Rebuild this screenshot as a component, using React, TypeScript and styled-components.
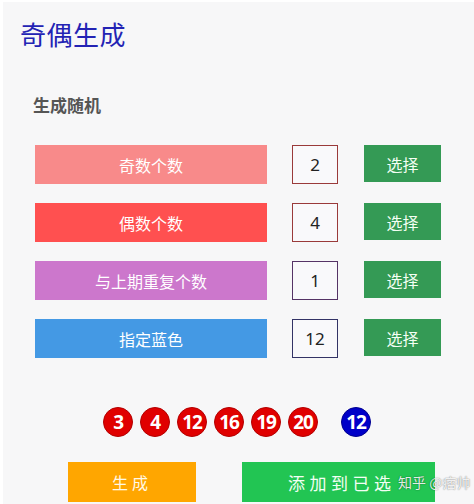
import React from "react";
import styled, { createGlobalStyle } from "styled-components";

const Global = createGlobalStyle`
  html, body { margin: 0; padding: 0; background: #ffffff; }
  body { font-family: "Noto Sans CJK SC", "Noto Sans", sans-serif; }
`;

const Page = styled.div`
  margin: 2px 0 0 3px;
  height: 502px;
  background: #f7f7f8;
  padding: 17px 0 0 17px;
  box-sizing: border-box;
  overflow: hidden;
  display: flex;
  flex-direction: column;
`;

const Title = styled.h1`
  margin: 0;
  font-size: 26px;
  line-height: 30px;
  font-weight: 400;
  color: #2323b4;
  letter-spacing: 0.5px;
`;

const SubTitle = styled.h2`
  margin: 46px 0 0 13px;
  font-size: 17px;
  line-height: 20px;
  font-weight: 700;
  color: #555555;
`;

const Rows = styled.div`
  margin: 30px 0 0 15px;
  display: flex;
  flex-direction: column;
  gap: 19px;
`;

const Row = styled.div`
  display: flex;
  align-items: flex-start;
  height: 39px;
`;

const Label = styled.div<{ $bg: string }>`
  width: 232px;
  height: 39px;
  background: ${(p) => p.$bg};
  color: #ffffff;
  font-size: 16px;
  display: flex;
  align-items: center;
  justify-content: center;
`;

const NumBox = styled.div<{ $border: string }>`
  margin-left: 25px;
  width: 46px;
  height: 39px;
  box-sizing: border-box;
  border: 1px solid ${(p) => p.$border};
  background: #f9f9fb;
  color: #222222;
  font-family: "Noto Sans", "Noto Sans CJK SC", sans-serif;
  font-size: 17px;
  display: flex;
  align-items: center;
  justify-content: center;
`;

const SelectBtn = styled.button`
  margin-left: 26px;
  width: 77px;
  height: 37px;
  border: none;
  background: #349a55;
  color: #f4fff4;
  font-family: "Noto Sans CJK SC", sans-serif;
  font-size: 16px;
  padding: 0;
`;

const Balls = styled.div`
  margin: 49px 0 0 83px;
  display: flex;
  gap: 7px;
`;

const Ball = styled.div<{ $blue?: boolean }>`
  width: 30px;
  height: 30px;
  border-radius: 50%;
  box-sizing: border-box;
  background: ${(p) => (p.$blue ? "#0000c8" : "#e00000")};
  border: 1.5px solid ${(p) => (p.$blue ? "#000090" : "#b30000")};
  margin-left: ${(p) => (p.$blue ? "16px" : "0")};
  color: #ffffff;
  font-family: "Open Sans", "Noto Sans", sans-serif;
  font-weight: 700;
  font-size: 19px;
  letter-spacing: -1.2px;
  display: flex;
  align-items: center;
  justify-content: center;
`;

const Actions = styled.div`
  margin: 25px 0 0 48px;
  display: flex;
  gap: 46px;
  position: relative;
`;

const ActionBtn = styled.button<{ $bg: string; $w: number; $ls: number; $fs: number }>`
  width: ${(p) => p.$w}px;
  height: 40px;
  border: none;
  padding: 0;
  background: ${(p) => p.$bg};
  color: #fff8e6;
  font-family: "Noto Sans CJK SC", sans-serif;
  font-size: ${(p) => p.$fs}px;
  letter-spacing: ${(p) => p.$ls}px;
  display: flex;
  align-items: center;
  justify-content: center;
`;

const AddBtn = styled(ActionBtn)`
  justify-content: flex-start;
  padding-left: 46px;
  color: #f2fff4;
`;

const Watermark = styled.span`
  position: absolute;
  left: 330px;
  top: 10px;
  font-size: 14px;
  color: rgba(255, 255, 255, 0.9);
  text-shadow: 0 0 1px rgba(0, 0, 0, 0.45), 0 0 2px rgba(0, 0, 0, 0.2);
  white-space: nowrap;
  pointer-events: none;
`;

const rows = [
  { label: "奇数个数", bg: "#f88a8a", border: "#9a3a3a", value: "2" },
  { label: "偶数个数", bg: "#ff5050", border: "#9a3a3a", value: "4" },
  { label: "与上期重复个数", bg: "#cc77cc", border: "#553366", value: "1" },
  { label: "指定蓝色", bg: "#4499e4", border: "#333366", value: "12" },
];

const reds = ["3", "4", "12", "16", "19", "20"];

export default function App() {
  return (
    <>
      <Global />
      <Page>
        <Title>奇偶生成</Title>
        <SubTitle>生成随机</SubTitle>
        <Rows>
          {rows.map((r) => (
            <Row key={r.label}>
              <Label $bg={r.bg}>{r.label}</Label>
              <NumBox $border={r.border}>{r.value}</NumBox>
              <SelectBtn>选择</SelectBtn>
            </Row>
          ))}
        </Rows>
        <Balls>
          {reds.map((n) => (
            <Ball key={n}>{n}</Ball>
          ))}
          <Ball $blue>12</Ball>
        </Balls>
        <Actions>
          <ActionBtn $bg="#ffa600" $w={128} $ls={4} $fs={16}>
            生成
          </ActionBtn>
          <AddBtn $bg="#22c553" $w={193} $ls={4.5} $fs={17}>
            添加到已选
          </AddBtn>
          <Watermark>知乎 @痞帅</Watermark>
        </Actions>
      </Page>
    </>
  );
}
